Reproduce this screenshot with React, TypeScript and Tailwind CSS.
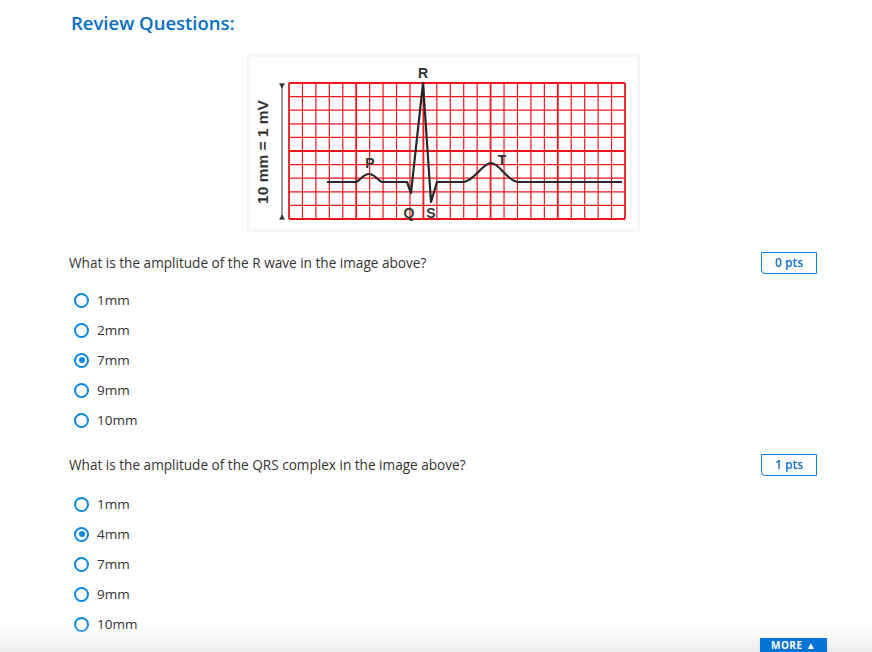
import React from "react";

const W = 13.44;
const H = 13.6;
const GX = 42;
const GY = 29;

function Ecg() {
  const vLines = [];
  for (let i = 0; i <= 25; i++) {
    vLines.push(
      <line key={"v" + i} x1={GX + i * W} y1={GY} x2={GX + i * W} y2={GY + 10 * H} stroke="#f0141e" strokeWidth={i % 5 === 0 ? 1.8 : 1.2} />
    );
  }
  const hLines = [];
  for (let j = 0; j <= 10; j++) {
    hLines.push(
      <line key={"h" + j} x1={GX} y1={GY + j * H} x2={GX + 25 * W} y2={GY + j * H} stroke="#f0141e" strokeWidth={j % 5 === 0 ? 1.8 : 1.2} />
    );
  }
  return (
    <svg width="393" height="178" viewBox="0 0 393 178">
      <rect x="0" y="0" width="393" height="178" fill="#f6f6f6" />
      <rect x="3" y="3" width="387" height="172" fill="#ffffff" />
      {vLines}
      {hLines}
      <path
        d="M80 128 L109 128 C114 126 116 120 122 120 C128 120 130 126 135 128 L160 128 L164 139 L176 29 L184 148 L190 128 L217 128 C228 126 236 109 244 109 C252 109 260 126 270 128 L375 128"
        fill="none"
        stroke="#262626"
        strokeWidth="2.2"
        strokeLinejoin="round"
      />
      <line x1="35" y1="31" x2="35" y2="163" stroke="#333" strokeWidth="1" />
      <path d="M32 30 L38 30 M33 30 L35 34 L37 30 Z" fill="#333" stroke="#333" strokeWidth="0.8" />
      <path d="M32 165 L38 165 M33 165 L35 161 L37 165 Z" fill="#333" stroke="#333" strokeWidth="0.8" />
      <g fontFamily="'Liberation Sans', Arial, sans-serif" fontWeight="700" fontSize="14" fill="#333">
        <text x="176" y="24" textAnchor="middle">R</text>
        <text x="123" y="114" textAnchor="middle">P</text>
        <text x="255" y="111" textAnchor="middle">T</text>
        <text x="162" y="164" textAnchor="middle">Q</text>
        <text x="184" y="164" textAnchor="middle">S</text>
        <text x="0" y="0" textAnchor="middle" transform="translate(20.5 98) rotate(-90)" fontSize="15.5">10 mm = 1 mV</text>
      </g>
    </svg>
  );
}

function Radio({ checked, label }: { checked?: boolean; label: string }) {
  return (
    <div className="flex h-[30px] items-center">
      <div className="ml-[5px] flex h-[15px] w-[15px] items-center justify-center rounded-full border-2 border-[#0b87e6]">
        {checked && <div className="h-[6px] w-[6px] rounded-full bg-[#0b87e6]" />}
      </div>
      <span className="ml-[8px] text-[13.5px] text-[#333333]">{label}</span>
    </div>
  );
}

function Badge({ text }: { text: string }) {
  return (
    <div className="flex h-[22px] w-[56px] items-center justify-center rounded-bl-[4px] border border-[#0b7fd9] text-[12px] font-semibold text-[#0b6fc4]">
      {text}
    </div>
  );
}

export default function App() {
  return (
    <div className="relative h-[652px] w-[872px] overflow-hidden bg-white" style={{ fontFamily: "'Open Sans', 'Noto Sans', sans-serif" }}>
      <div className="ml-[69px] w-[748px] pt-[9px]">
        <h2 className="ml-[2px] text-[18.5px] font-semibold leading-[28px] text-[#0770c3]">Review Questions:</h2>
        <div className="mt-[17px] flex justify-center">
          <Ecg />
        </div>
        <div className="mt-[20px] flex items-center justify-between">
          <p className="text-[13.6px] text-[#333333]">What is the amplitude of the R wave in the image above?</p>
          <Badge text="0 pts" />
        </div>
        <div className="mt-[11px] flex flex-col">
          <Radio label="1mm" />
          <Radio label="2mm" />
          <Radio label="7mm" checked />
          <Radio label="9mm" />
          <Radio label="10mm" />
        </div>
        <div className="mt-[19px] flex items-center justify-between">
          <p className="text-[13.6px] text-[#333333]">What is the amplitude of the QRS complex in the image above?</p>
          <Badge text="1 pts" />
        </div>
        <div className="mt-[13px] flex flex-col">
          <Radio label="1mm" />
          <Radio label="4mm" checked />
          <Radio label="7mm" />
          <Radio label="9mm" />
          <Radio label="10mm" />
        </div>
      </div>
      <div className="absolute bottom-0 left-0 h-[26px] w-full bg-gradient-to-b from-white/0 to-[#ededed]" />
      <div className="absolute left-[760px] top-[638px] flex h-[20px] w-[67px] items-start justify-center bg-[#0374d6] pt-[1px] text-[10px] font-bold leading-[12px] tracking-wider text-white shadow">
        MORE ▲
      </div>
    </div>
  );
}
